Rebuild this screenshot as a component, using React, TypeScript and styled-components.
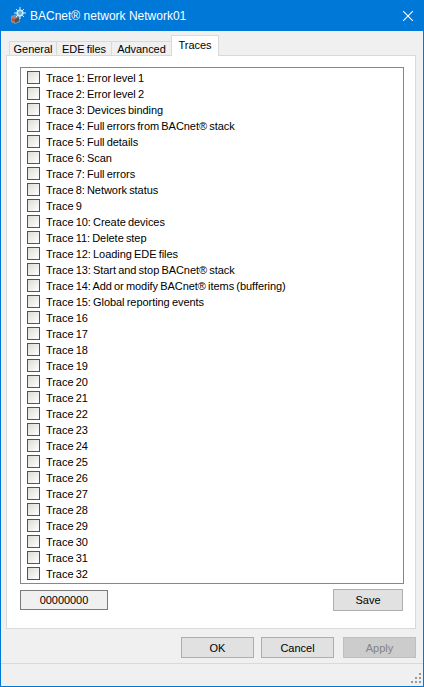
import styled, { createGlobalStyle } from "styled-components";

const traces = [
  "Trace 1: Error level 1",
  "Trace 2: Error level 2",
  "Trace 3: Devices binding",
  "Trace 4: Full errors from BACnet® stack",
  "Trace 5: Full details",
  "Trace 6: Scan",
  "Trace 7: Full errors",
  "Trace 8: Network status",
  "Trace 9",
  "Trace 10: Create devices",
  "Trace 11: Delete step",
  "Trace 12: Loading EDE files",
  "Trace 13: Start and stop BACnet® stack",
  "Trace 14: Add or modify BACnet® items (buffering)",
  "Trace 15: Global reporting events",
  ...Array.from({ length: 17 }, (_, i) => `Trace ${i + 16}`),
];

const tabs = [
  { label: "General", width: 48 },
  { label: "EDE files", width: 56 },
  { label: "Advanced", width: 61 },
  { label: "Traces", width: 48 },
];

const GlobalStyle = createGlobalStyle`
  html, body {
    margin: 0;
    padding: 0;
    background: #f0f0f0;
  }
  * {
    box-sizing: border-box;
  }
`;

const Window = styled.div`
  width: 424px;
  height: 687px;
  display: flex;
  flex-direction: column;
  border: 1px solid #0078d7;
  border-top: 0;
  background: #f0f0f0;
  color: #000;
  font-family: "Liberation Sans", Arial, sans-serif;
  font-size: 11px;
  letter-spacing: -0.05px;
  word-spacing: -0.8px;
`;

const TitleBar = styled.div`
  height: 31px;
  flex: none;
  margin: 0 -1px;
  padding: 0 11px 0 10px;
  display: flex;
  align-items: center;
  gap: 4px;
  background: #0078d7;
  color: #fff;
  font-size: 12px;
  letter-spacing: 0;
  word-spacing: 0;
`;

const Title = styled.span`
  flex: 1;
`;

const Content = styled.div`
  flex: 1;
  display: flex;
  flex-direction: column;
  padding: 5px 7px 0 5px;
`;

const TabStrip = styled.div`
  height: 20px;
  flex: none;
  display: flex;
  align-items: flex-end;
  padding-left: 3px;
  position: relative;
  z-index: 1;
  margin-bottom: -1px;
`;

const Tab = styled.div<{ $active?: boolean; $width: number }>`
  width: ${(p) => p.$width}px;
  height: ${(p) => (p.$active ? 21 : 15)}px;
  padding-bottom: ${(p) => (p.$active ? 3 : 0)}px;
  margin-right: -1px;
  display: flex;
  align-items: center;
  justify-content: center;
  background: ${(p) => (p.$active ? "#fff" : "#f0f0f0")};
  border: 1px solid #d9d9d9;
  border-bottom: ${(p) => (p.$active ? "0" : "1px solid #d9d9d9")};
  white-space: nowrap;
`;

const Panel = styled.div`
  height: 574px;
  flex: none;
  padding: 11px 11px 0 13px;
  display: flex;
  flex-direction: column;
  background: #fff;
  border: 1px solid #d9d9d9;
`;

const TraceList = styled.div`
  height: 517px;
  flex: none;
  padding: 1px 6px;
  border: 1px solid #828790;
`;

const TraceRow = styled.label`
  height: 16px;
  display: flex;
  align-items: center;
  gap: 6px;
`;

const CheckBox = styled.span`
  width: 13px;
  height: 13px;
  flex: none;
  border: 1px solid #2f5b84;
  background: linear-gradient(135deg, #dcdcd7, #fff);
`;

const TraceLabel = styled.span`
  padding-top: 1px;
`;

const PanelFooter = styled.div`
  display: flex;
  justify-content: space-between;
  padding: 5px 1px 0 0;
`;

const CountBox = styled.div`
  width: 88px;
  height: 20px;
  margin-top: 1px;
  display: flex;
  align-items: center;
  justify-content: center;
  background: #f0f0f0;
  border: 1px solid #7a7a7a;
`;

const Button = styled.button<{ $width: number; $height?: number }>`
  width: ${(p) => p.$width}px;
  height: ${(p) => p.$height ?? 21}px;
  padding: 0;
  background: #e1e1e1;
  border: 1px solid #adadad;
  border-radius: 0;
  color: #000;
  font: inherit;

  &:disabled {
    background: #ccc;
    border-color: #bfbfbf;
    color: #838383;
  }
`;

const DialogButtons = styled.div`
  flex: none;
  display: flex;
  justify-content: flex-end;
  gap: 7px;
  padding: 8px 0 0;

  & > button:last-child {
    margin-left: 2px;
  }
`;

const StatusBar = styled.div`
  height: 22px;
  flex: none;
  margin: 5px -7px 0 -5px;
  display: flex;
  align-items: flex-end;
  justify-content: flex-end;
  padding: 0 2px 2px 0;
  border-top: 1px solid #d9d9d9;
`;

function AppIcon() {
  return (
    <svg width="16" height="18" viewBox="0 0 16 18">
      <path d="M1 9l6-2 3 2v6l-5 2-4-2z" fill="#8a8f99" />
      <path d="M2 11l3 1v3l-3-1z" fill="#c9502f" />
      <path d="M5 12l4-2v4l-4 2z" fill="#4c5059" />
      <circle cx="10" cy="6" r="3.6" fill="#bfe6f7" />
      <path
        d="M10 0v12M4 6h12M6 2l8 8M14 2l-8 8"
        stroke="#d7eefa"
        strokeWidth="1"
      />
      <circle cx="10" cy="6" r="2" fill="#5bb5e6" />
    </svg>
  );
}

function CloseIcon() {
  return (
    <svg width="10" height="10" viewBox="0 0 10 10">
      <path d="M0 0l10 10M10 0L0 10" stroke="#fff" strokeWidth="1.1" />
    </svg>
  );
}

function Grip() {
  const dots = [
    [8, 0],
    [4, 4],
    [8, 4],
    [0, 8],
    [4, 8],
    [8, 8],
  ];
  return (
    <svg width="10" height="10" viewBox="0 0 10 10">
      {dots.map(([x, y]) => (
        <rect key={`${x}-${y}`} x={x} y={y} width="2" height="2" fill="#999" />
      ))}
    </svg>
  );
}

export default function App() {
  return (
    <>
      <GlobalStyle />
      <Window>
        <TitleBar>
          <AppIcon />
          <Title>BACnet® network Network01</Title>
          <CloseIcon />
        </TitleBar>
        <Content>
          <TabStrip>
            {tabs.map((tab) => (
              <Tab key={tab.label} $width={tab.width} $active={tab.label === "Traces"}>
                {tab.label}
              </Tab>
            ))}
          </TabStrip>
          <Panel>
            <TraceList>
              {traces.map((trace) => (
                <TraceRow key={trace}>
                  <CheckBox />
                  <TraceLabel>{trace}</TraceLabel>
                </TraceRow>
              ))}
            </TraceList>
            <PanelFooter>
              <CountBox>00000000</CountBox>
              <Button $width={70} $height={22}>
                Save
              </Button>
            </PanelFooter>
          </Panel>
          <DialogButtons>
            <Button $width={73}>OK</Button>
            <Button $width={73}>Cancel</Button>
            <Button $width={73} disabled>
              Apply
            </Button>
          </DialogButtons>
          <StatusBar>
            <Grip />
          </StatusBar>
        </Content>
      </Window>
    </>
  );
}
